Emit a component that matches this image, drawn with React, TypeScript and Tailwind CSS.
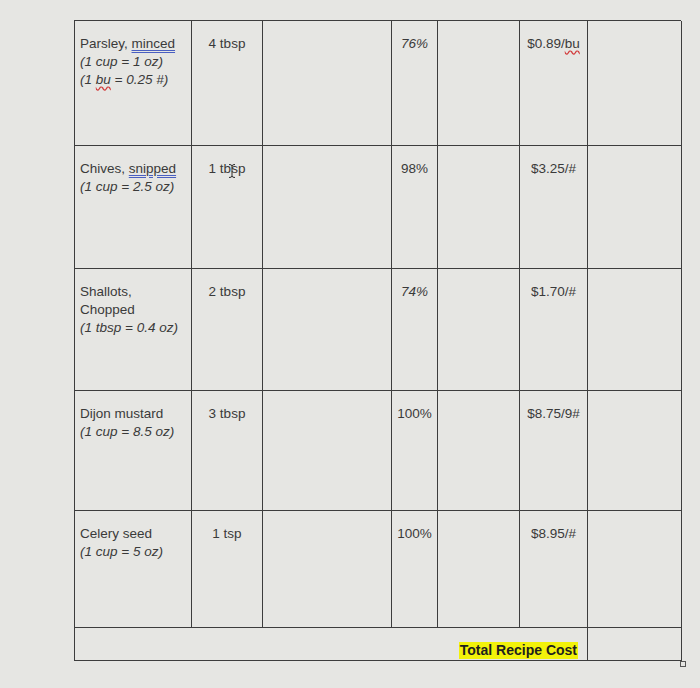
import React from "react";

type Row = {
  name: React.ReactNode;
  qty: string;
  pct: string;
  pctItalic?: boolean;
  price: React.ReactNode;
  h: string;
  cursor?: boolean;
};

const grammar = "underline decoration-double decoration-[#4a5fc1] underline-offset-2";
const spell = "underline decoration-wavy decoration-[#d23a3a] underline-offset-2";

const rows: Row[] = [
  {
    name: (
      <>
        <div>
          Parsley, <span className={grammar}>minced</span>
        </div>
        <div className="italic">(1 cup = 1 oz)</div>
        <div className="italic">
          (1 <span className={spell}>bu</span> = 0.25 #)
        </div>
      </>
    ),
    qty: "4 tbsp",
    pct: "76%",
    pctItalic: true,
    price: (
      <>
        $0.89/<span className={spell}>bu</span>
      </>
    ),
    h: "h-[125px]",
  },
  {
    name: (
      <>
        <div>
          Chives, <span className={grammar}>snipped</span>
        </div>
        <div className="italic">(1 cup = 2.5 oz)</div>
      </>
    ),
    qty: "1 tbsp",
    pct: "98%",
    price: "$3.25/#",
    h: "h-[123px]",
    cursor: true,
  },
  {
    name: (
      <>
        <div>Shallots,</div>
        <div>Chopped</div>
        <div className="italic">(1 tbsp = 0.4 oz)</div>
      </>
    ),
    qty: "2 tbsp",
    pct: "74%",
    pctItalic: true,
    price: "$1.70/#",
    h: "h-[122px]",
  },
  {
    name: (
      <>
        <div>Dijon mustard</div>
        <div className="italic">(1 cup = 8.5 oz)</div>
      </>
    ),
    qty: "3 tbsp",
    pct: "100%",
    price: "$8.75/9#",
    h: "h-[120px]",
  },
  {
    name: (
      <>
        <div>Celery seed</div>
        <div className="italic">(1 cup = 5 oz)</div>
      </>
    ),
    qty: "1 tsp",
    pct: "100%",
    price: "$8.95/#",
    h: "h-[117px]",
  },
];

const cell = "border-r border-b border-[#3d3d3d]";

export default function App() {
  return (
    <div
      className="w-[700px] h-[688px] bg-[#e6e6e3] text-[#3a3a3a] text-[13.5px] leading-[18px] overflow-hidden"
      style={{ fontFamily: '"Liberation Sans", Arial, sans-serif' }}
    >
      <div className="pt-[20px] pl-[74px]">
        <div className="relative w-[607px] border-l border-t border-[#3d3d3d]">
          {rows.map((r, i) => (
            <div
              key={i}
              className={`grid grid-cols-[117px_71px_129px_46px_82px_68px_94px] ${r.h}`}
            >
              <div className={`${cell} pl-[5px] pt-[14px]`}>{r.name}</div>
              <div className={`${cell} relative pt-[14px] text-center`}>
                {r.qty}
                {r.cursor && (
                  <svg
                    className="absolute left-[36px] top-[17px]"
                    width="8"
                    height="16"
                    viewBox="0 0 8 16"
                  >
                    <path
                      d="M1 1.5 Q4 1.5 4 3 Q4 1.5 7 1.5 M4 3 V13 M1 14.5 Q4 14.5 4 13 Q4 14.5 7 14.5"
                      fill="none"
                      stroke="#2a2a2a"
                      strokeWidth="1"
                    />
                  </svg>
                )}
              </div>
              <div className={cell}></div>
              <div className={`${cell} pt-[14px] text-center ${r.pctItalic ? "italic" : ""}`}>
                {r.pct}
              </div>
              <div className={cell}></div>
              <div className={`${cell} pt-[14px] text-center`}>{r.price}</div>
              <div className={cell}></div>
            </div>
          ))}
          <div className="grid grid-cols-[513px_94px] h-[33px]">
            <div className={`${cell} flex items-end justify-end pr-[9px] pb-[1px]`}>
              <span className="bg-[#f2f20a] font-bold text-[14px] text-[#1e1e1e] px-[1px] leading-[17px]">
                Total Recipe Cost
              </span>
            </div>
            <div className={cell}></div>
          </div>
          <div className="absolute right-[-5px] bottom-[-6px] w-[6px] h-[6px] border border-[#555] bg-[#e6e6e3]"></div>
        </div>
      </div>
    </div>
  );
}
